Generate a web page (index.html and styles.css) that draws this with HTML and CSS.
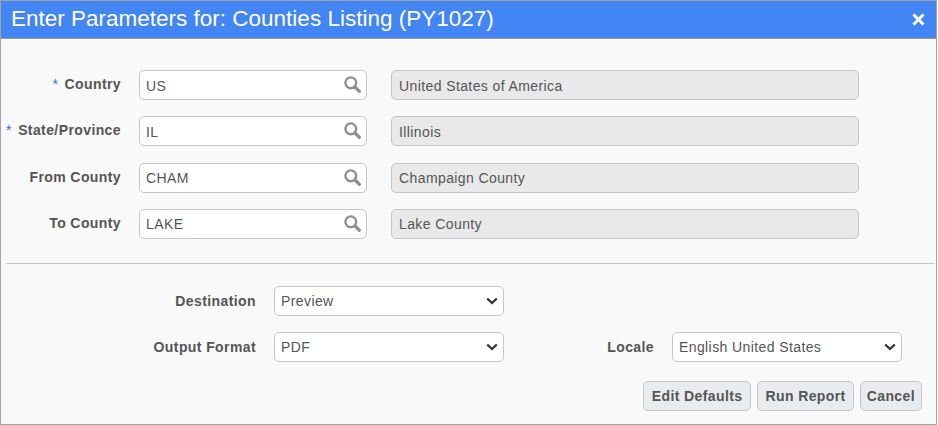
FILE: index.html
```html
<!DOCTYPE html>
<html lang="en">
<head>
  <meta charset="UTF-8">
  <title>Enter Parameters</title>
  <link rel="stylesheet" href="styles.css">
</head>
<body>
  <div class="dialog">
    <div class="dialog-header">
      <h1>Enter Parameters for: Counties Listing (PY1027)</h1>
      <svg class="close" width="13" height="13" viewBox="0 0 13 13"><path d="M1.5 1.5 L11.5 11.5 M11.5 1.5 L1.5 11.5" stroke="#fff" stroke-width="3"/></svg>
    </div>
    <div class="dialog-body">
      <div class="params">
        <label class="field-label"><span class="req">*</span> Country</label>
        <div class="lookup">
          <input type="text" value="US">
          <svg class="search" width="17" height="17" viewBox="0 0 17 17"><circle cx="6.8" cy="6.8" r="5.4" fill="none" stroke="#8f8f8f" stroke-width="2.4"/><path d="M11 11 L15.4 15.4" stroke="#8f8f8f" stroke-width="3.2" stroke-linecap="round"/></svg>
        </div>
        <input class="readonly" type="text" value="United States of America" readonly>

        <label class="field-label"><span class="req">*</span> State/Province</label>
        <div class="lookup">
          <input type="text" value="IL">
          <svg class="search" width="17" height="17" viewBox="0 0 17 17"><circle cx="6.8" cy="6.8" r="5.4" fill="none" stroke="#8f8f8f" stroke-width="2.4"/><path d="M11 11 L15.4 15.4" stroke="#8f8f8f" stroke-width="3.2" stroke-linecap="round"/></svg>
        </div>
        <input class="readonly" type="text" value="Illinois" readonly>

        <label class="field-label">From County</label>
        <div class="lookup">
          <input type="text" value="CHAM">
          <svg class="search" width="17" height="17" viewBox="0 0 17 17"><circle cx="6.8" cy="6.8" r="5.4" fill="none" stroke="#8f8f8f" stroke-width="2.4"/><path d="M11 11 L15.4 15.4" stroke="#8f8f8f" stroke-width="3.2" stroke-linecap="round"/></svg>
        </div>
        <input class="readonly" type="text" value="Champaign County" readonly>

        <label class="field-label">To County</label>
        <div class="lookup">
          <input type="text" value="LAKE">
          <svg class="search" width="17" height="17" viewBox="0 0 17 17"><circle cx="6.8" cy="6.8" r="5.4" fill="none" stroke="#8f8f8f" stroke-width="2.4"/><path d="M11 11 L15.4 15.4" stroke="#8f8f8f" stroke-width="3.2" stroke-linecap="round"/></svg>
        </div>
        <input class="readonly" type="text" value="Lake County" readonly>
      </div>

      <hr class="divider">

      <div class="output">
        <label class="field-label">Destination</label>
        <select><option>Preview</option></select>
        <span></span>
        <span></span>

        <label class="field-label">Output Format</label>
        <select><option>PDF</option></select>
        <label class="field-label">Locale</label>
        <select><option>English United States</option></select>
      </div>

      <div class="actions">
        <button class="btn-wide">Edit Defaults</button>
        <button>Run Report</button>
        <button class="btn-small">Cancel</button>
      </div>
    </div>
  </div>
</body>
</html>
```

FILE: styles.css
```css
* {
  box-sizing: border-box;
}

body {
  margin: 0;
  font-family: "Liberation Sans", Arial, sans-serif;
  font-size: 14px;
  letter-spacing: 0.4px;
  color: #555;
  background: #fff;
}

.dialog {
  width: 937px;
  height: 425px;
  background-color: #f9f9f9;
  border: 1px solid #a3a3a3;
  overflow: hidden;
}

.dialog-header {
  display: flex;
  justify-content: space-between;
  align-items: center;
  height: 38px;
  padding: 0 11px 0 10px;
  background-color: #4285f4;
  border-bottom: 1px solid #9a9a9a;
}

.dialog-header h1 {
  margin: 0 0 1px;
  font-size: 22.5px;
  font-weight: normal;
  letter-spacing: 0;
  color: #fff;
}

.dialog-body {
  padding-top: 31px;
}

.params {
  display: grid;
  grid-template-columns: 138px 228px 492px;
  row-gap: 16.33px;
  align-items: center;
}

.field-label {
  padding-right: 18px;
  font-weight: bold;
  text-align: right;
  color: #555;
}

.params .field-label {
  margin-top: -2px;
}

.req {
  margin-right: 2px;
  font-weight: normal;
  color: #2f6fd0;
}

input,
select {
  height: 30px;
  font-family: inherit;
  font-size: 14px;
  letter-spacing: inherit;
  color: #555;
  border: 1px solid #c6c6c6;
  border-radius: 5px;
  background-color: #fff;
}

.lookup {
  position: relative;
}

.lookup input {
  width: 100%;
  padding: 1px 26px 0 6px;
}

.search {
  position: absolute;
  top: 6px;
  right: 6px;
}

.readonly {
  width: 468px;
  margin-left: 24px;
  padding: 1px 7px 0;
  background-color: #e9e9e9;
}

.divider {
  margin: 24px 1px 22px 5px;
  border: none;
  border-top: 1px solid #c8c8c8;
}

.output {
  display: grid;
  grid-template-columns: 273px 230px 168px 230px;
  row-gap: 16px;
  align-items: center;
}

.output select {
  appearance: none;
  padding-left: 6px;
  background-image: url("data:image/svg+xml,%3Csvg xmlns='http://www.w3.org/2000/svg' width='12' height='8' viewBox='0 0 12 8'%3E%3Cpath d='M1.2 1.5 L6 6 L10.8 1.5' fill='none' stroke='%23333' stroke-width='2.3'/%3E%3C/svg%3E");
  background-repeat: no-repeat;
  background-position: right 5px center;
}

.actions {
  display: flex;
  justify-content: flex-end;
  gap: 6px;
  margin-top: 19px;
  padding-right: 14px;
}

button {
  height: 30px;
  padding: 0 7px;
  font-family: inherit;
  font-size: 14px;
  font-weight: bold;
  letter-spacing: inherit;
  color: #555;
  background-color: #e9ecef;
  border: 1px solid #c6c6c6;
  border-radius: 5px;
}

.btn-wide {
  padding: 0 8px;
}

.btn-small {
  padding: 0 6px;
}
```
